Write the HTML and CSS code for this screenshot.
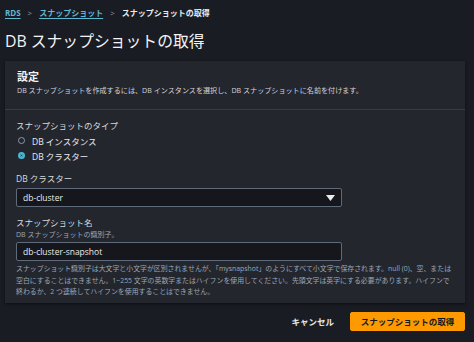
FILE: index.html
```html
<!DOCTYPE html>
<html lang="ja">
  <head>
    <meta charset="utf-8">
    <title>DB スナップショットの取得</title>
    <link rel="stylesheet" href="styles.css">
  </head>
  <body>
    <div class="page">
      <nav class="crumbs">
        <a href="#">RDS</a>
        <span class="sep">&gt;</span>
        <a href="#">スナップショット</a>
        <span class="sep">&gt;</span>
        <span class="current">スナップショットの取得</span>
      </nav>

      <h1 class="title">DB スナップショットの取得</h1>

      <div class="panel">
        <div class="panel-head">
          <h2>設定</h2>
          <p>DB スナップショットを作成するには、DB インスタンスを選択し、DB スナップショットに名前を付けます。</p>
        </div>
        <div class="panel-body">
          <div class="field">
            <div class="label">スナップショットのタイプ</div>
            <label class="radio"><span class="dot"></span>DB インスタンス</label>
            <label class="radio"><span class="dot on"></span>DB クラスター</label>
          </div>

          <div class="field">
            <div class="label">DB クラスター</div>
            <div class="select">
              <span>db-cluster</span>
              <svg width="9" height="6" viewBox="0 0 9 6"><path d="M0 0h9L4.5 6z" fill="#e9ebed"/></svg>
            </div>
          </div>

          <div class="field last">
            <div class="label">スナップショット名</div>
            <div class="hint">DB スナップショットの識別子。</div>
            <div class="input">db-cluster-snapshot</div>
            <p class="constraint">スナップショット識別子は大文字と小文字が区別されませんが、「mysnapshot」のようにすべて小文字で保存されます。null (0)、空、または<br>空白にすることはできません。1~255 文字の英数字またはハイフンを使用してください。先頭文字は英字にする必要があります。ハイフンで<br>終わるか、2 つ連続してハイフンを使用することはできません。</p>
          </div>
        </div>
      </div>

      <div class="actions">
        <button class="link-btn">キャンセル</button>
        <button class="primary">スナップショットの取得</button>
      </div>
    </div>
  </body>
</html>
```

FILE: styles.css
```css
body {
  margin: 0;
  background-color: #1a1c23;
  font-family: "Open Sans", "Noto Sans CJK JP", sans-serif;
  color: #d5dbdb;
}

.page {
  padding: 0 9px 0 5px;
}

.crumbs {
  height: 24px;
  display: flex;
  align-items: center;
  font-size: 8px;
  font-weight: bold;
}

.crumbs a {
  color: #5fb7d0;
  text-decoration: underline;
  text-underline-offset: 2px;
}

.crumbs .sep {
  color: #8d99a8;
  margin: 0 7px;
  font-weight: normal;
}

.crumbs .current {
  color: #e9ebed;
}

.title {
  margin: 0;
  height: 37px;
  line-height: 34px;
  font-size: 15.8px;
  font-weight: normal;
  color: #f2f3f3;
}

.panel {
  background-color: #24262d;
  box-shadow: 0 1px 3px rgba(0, 0, 0, 0.5);
}

.panel-head {
  padding: 7px 12px 0;
  height: 41px;
  border-bottom: 1px solid #393c43;
}

.panel-head h2 {
  margin: 0;
  font-size: 11px;
  line-height: 17px;
  color: #f2f3f3;
}

.panel-head p {
  margin: 0;
  font-size: 7.1px;
  line-height: 10px;
  color: #d1d5db;
}

.panel-body {
  padding: 9px 12px 5px 11px;
}

.field {
  margin-bottom: 9px;
}

.field.last {
  margin-bottom: 0;
}

.label {
  font-size: 8.5px;
  line-height: 14px;
  color: #d5dbdb;
}

.radio {
  display: flex;
  align-items: center;
  height: 15px;
  padding-left: 2px;
  font-size: 8.5px;
  color: #e9ebed;
}

.dot {
  width: 7px;
  height: 7px;
  border: 1px solid #8d99a8;
  border-radius: 50%;
  margin-right: 7px;
  box-sizing: border-box;
}

.dot.on {
  border: 2px solid #44b9d6;
  background-color: #1a1c23;
  box-shadow: inset 0 0 0 1px #44b9d6;
}

.select,
.input {
  width: 326px;
  height: 19px;
  box-sizing: border-box;
  border: 1px solid #5f6b7a;
  border-radius: 2px;
  background-color: #15171d;
  display: flex;
  align-items: center;
  justify-content: space-between;
  padding: 0 6px;
  font-size: 8.5px;
  color: #e9ebed;
  margin-top: 2px;
}

.hint {
  font-size: 7px;
  line-height: 10px;
  color: #9ba7b6;
}

.constraint {
  margin: 2px 0 0;
  font-size: 6.9px;
  line-height: 11.5px;
  white-space: nowrap;
  color: #9ba7b6;
}

.actions {
  display: flex;
  justify-content: flex-end;
  align-items: center;
  padding-top: 9px;
}

.actions button {
  font-family: inherit;
  font-weight: bold;
  font-size: 8.5px;
  cursor: pointer;
}

.link-btn {
  background: none;
  border: none;
  color: #e9ebed;
  margin-right: 10px;
}

.primary {
  width: 115px;
  height: 19px;
  background-color: #ff9900;
  border: 1px solid #ff9900;
  border-radius: 2px;
  color: #16191f;
}
```
